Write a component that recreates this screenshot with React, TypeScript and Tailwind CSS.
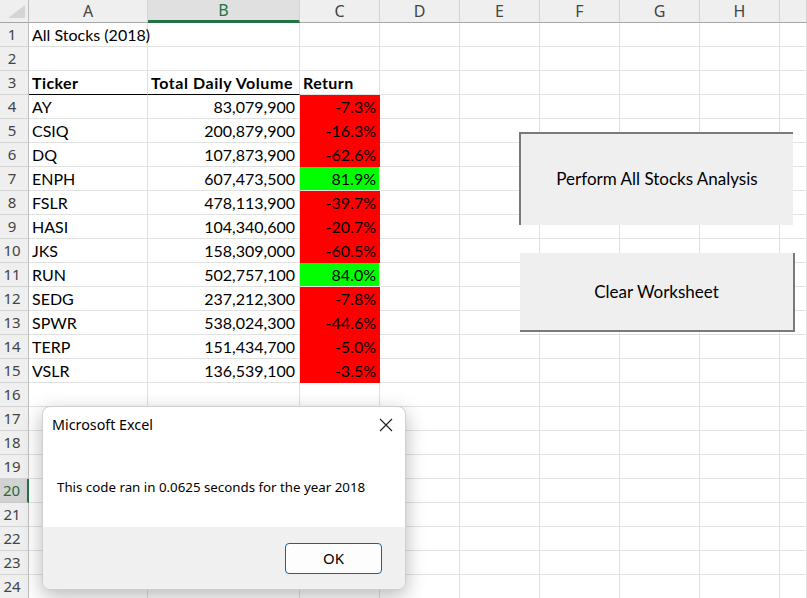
import React from "react";

//시트 데이터
const stocks: [string, string, string, boolean][] = [
  ["AY", "83,079,900", "-7.3%", false],
  ["CSIQ", "200,879,900", "-16.3%", false],
  ["DQ", "107,873,900", "-62.6%", false],
  ["ENPH", "607,473,500", "81.9%", true],
  ["FSLR", "478,113,900", "-39.7%", false],
  ["HASI", "104,340,600", "-20.7%", false],
  ["JKS", "158,309,000", "-60.5%", false],
  ["RUN", "502,757,100", "84.0%", true],
  ["SEDG", "237,212,300", "-7.8%", false],
  ["SPWR", "538,024,300", "-44.6%", false],
  ["TERP", "151,434,700", "-5.0%", false],
  ["VSLR", "136,539,100", "-3.5%", false],
];

const cols = ["A", "B", "C", "D", "E", "F", "G", "H", ""];
const rows = Array.from({ length: 24 }, (_, i) => i + 1);

const gridCols =
  "grid grid-cols-[29px_119px_152px_80px_80px_80px_80px_80px_80px_1fr]";
const cellFont = { fontFamily: "Lato, 'Liberation Sans', sans-serif" };
const uiFont = { fontFamily: "'Noto Sans', 'Open Sans', sans-serif" };

function Cell({
  children,
  className = "",
}: {
  children?: React.ReactNode;
  className?: string;
}) {
  return (
    <div
      className={`h-[24px] border-r border-b border-[#e1e1e1] flex items-center whitespace-nowrap overflow-visible text-[16px] text-black ${className}`}
      style={cellFont}
    >
      {children}
    </div>
  );
}

function SheetRow({ n }: { n: number }) {
  const s = n >= 4 && n <= 15 ? stocks[n - 4] : null;
  const active = n === 20;
  return (
    <>
      <div
        className={`h-[24px] border-b flex items-center justify-center pr-[4px] text-[15px] ${
          active
            ? "bg-[#d2d2d2] text-[#1e6b42] border-[#c8c8c8] border-r-2 border-r-[#217346]"
            : "bg-[#efefef] text-[#444] border-[#d4d4d4] border-r border-r-[#bdbdbd]"
        }`}
        style={uiFont}
      >
        {n}
      </div>
      {n === 1 && (
        <>
          <Cell className="pl-[3px]">All Stocks (2018)</Cell>
          <Cell />
          <Cell />
        </>
      )}
      {n === 3 && (
        <>
          <Cell className="pl-[3px] font-bold tracking-[0.4px] border-b-black">
            Ticker
          </Cell>
          <Cell className="pl-[3px] font-bold tracking-[0.55px] border-b-black">
            Total Daily Volume
          </Cell>
          <Cell className="pl-[3px] font-bold tracking-[0.4px]">Return</Cell>
        </>
      )}
      {s && (
        <>
          <Cell className="pl-[3px]">{s[0]}</Cell>
          <Cell className="justify-end pr-[4px]">{s[1]}</Cell>
          <Cell
            className={`justify-end pr-[3px] ${
              s[3]
                ? "bg-[#00ff00] border-[#00ff00]"
                : "bg-[#ff0000] border-[#ff0000]"
            }`}
          >
            {s[2]}
          </Cell>
        </>
      )}
      {n !== 1 && n !== 3 && !s && (
        <>
          <Cell />
          <Cell />
          <Cell />
        </>
      )}
      <Cell />
      <Cell />
      <Cell />
      <Cell />
      <Cell />
      <Cell />
    </>
  );
}

function App() {
  return (
    <div className="relative w-[807px] h-[598px] overflow-hidden bg-white">
      {/* 열 머리글 */}
      <div className={gridCols}>
        <div className="h-[23px] bg-[#efefef] border-r border-b border-r-[#bdbdbd] border-b-[#a6a6a6] flex items-end justify-end pr-[3px] pb-[4px]">
          <svg width="17" height="13" viewBox="0 0 17 13">
            <polygon points="17,0 17,13 0,13" fill="#d4d4d4" />
          </svg>
        </div>
        {cols.map((c) => (
          <div
            key={c || "I"}
            className={`h-[23px] flex items-center justify-center text-[16px] border-r border-r-[#d4d4d4] ${
              c === "B"
                ? "bg-[#e0e0e0] text-[#217346] border-b-[3px] border-b-[#217346]"
                : "bg-[#efefef] text-[#444] border-b border-b-[#a6a6a6]"
            }`}
            style={uiFont}
          >
            {c}
          </div>
        ))}
      </div>

      {/* 행 */}
      <div className={gridCols}>
        {rows.map((n) => (
          <SheetRow key={n} n={n} />
        ))}
      </div>

      {/* 매크로 버튼 */}
      <button
        className="absolute left-[519px] top-[132px] w-[274px] h-[93px] bg-[#efefef] border-t-2 border-l-2 border-[#7a7a7a] text-[17px] text-black pb-[2px]"
        style={cellFont}
      >
        Perform All Stocks Analysis
      </button>
      <button
        className="absolute left-[520px] top-[253px] w-[275px] h-[79px] bg-[#efefef] border-r-2 border-b-2 border-[#7a7a7a] text-[17px] text-black"
        style={cellFont}
      >
        Clear Worksheet
      </button>

      {/* 메시지 박스 */}
      <div
        className="absolute left-[42px] top-[406px] w-[364px] h-[184px] rounded-[8px] border border-[#cfcfcf] bg-white shadow-[0_6px_20px_rgba(0,0,0,0.28)] overflow-hidden flex flex-col"
        style={uiFont}
      >
        <div className="flex items-center justify-between pl-[9px] pr-[12px] h-[36px]">
          <span className="text-[14.3px] text-black">Microsoft Excel</span>
          <svg width="14" height="14" viewBox="0 0 14 14">
            <path
              d="M1 1 L13 13 M13 1 L1 13"
              stroke="#222"
              strokeWidth="1.2"
              fill="none"
            />
          </svg>
        </div>
        <div className="flex-1 pl-[14px] pt-[35px] text-[13.3px] text-black">
          This code ran in 0.0625 seconds for the year 2018
        </div>
        <div className="h-[62px] bg-[#f0f0f0] flex items-start justify-end pt-[16px] pr-[23px]">
          <button className="w-[97px] h-[31px] rounded-[4px] border border-[#0067c0] bg-[#fdfdfd] text-[15px] text-black">
            OK
          </button>
        </div>
      </div>
    </div>
  );
}

export default App;
